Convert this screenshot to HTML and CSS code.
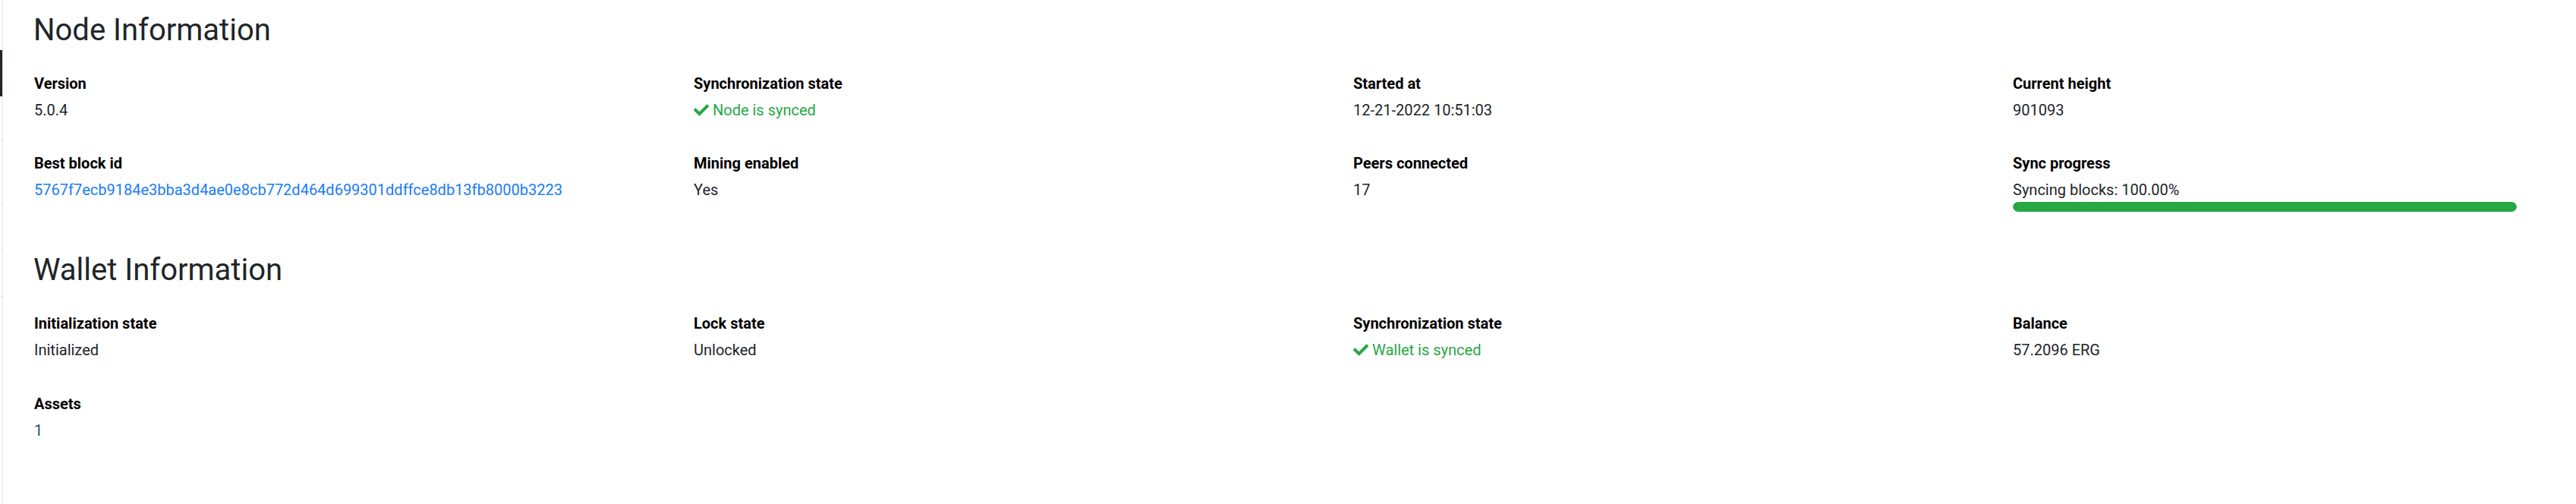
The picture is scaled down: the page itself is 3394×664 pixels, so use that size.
FILE: index.html
```html
<!DOCTYPE html>
<html lang="en">
<head>
<meta charset="utf-8">
<title>Node Information</title>
<link rel="stylesheet" href="styles.css">
</head>
<body>
<div class="layout">
  <aside class="sidebar">
    <div class="nav-active"></div>
    <div class="nav-sep sep-a"></div>
    <div class="nav-sep sep-b"></div>
    <div class="nav-sep sep-c"></div>
    <div class="nav-sep sep-d"></div>
  </aside>
  <main class="content">
    <section class="info-section">
      <h2 class="section-title">Node Information</h2>
      <div class="info-grid">
        <div class="info-item">
          <div class="info-label">Version</div>
          <div class="info-value">5.0.4</div>
        </div>
        <div class="info-item">
          <div class="info-label">Synchronization state</div>
          <div class="info-value status-ok"><svg class="check-icon" viewBox="0 0 512 512" aria-hidden="true"><path d="M173.898 439.404l-166.4-166.4c-9.997-9.997-9.997-26.206 0-36.204l36.203-36.204c9.997-9.998 26.207-9.998 36.204 0L192 312.69 432.095 72.596c9.997-9.997 26.207-9.997 36.204 0l36.203 36.204c9.997 9.997 9.997 26.206 0 36.204l-294.4 294.401c-9.998 9.997-26.207 9.997-36.204-.001z"/></svg> Node is synced</div>
        </div>
        <div class="info-item">
          <div class="info-label">Started at</div>
          <div class="info-value">12-21-2022 10:51:03</div>
        </div>
        <div class="info-item">
          <div class="info-label">Current height</div>
          <div class="info-value">901093</div>
        </div>
        <div class="info-item">
          <div class="info-label">Best block id</div>
          <div class="info-value"><a class="link" href="#">5767f7ecb9184e3bba3d4ae0e8cb772d464d699301ddffce8db13fb8000b3223</a></div>
        </div>
        <div class="info-item">
          <div class="info-label">Mining enabled</div>
          <div class="info-value">Yes</div>
        </div>
        <div class="info-item">
          <div class="info-label">Peers connected</div>
          <div class="info-value">17</div>
        </div>
        <div class="info-item">
          <div class="info-label">Sync progress</div>
          <div class="info-value">Syncing blocks: 100.00%</div>
          <div class="progress"><div class="progress-bar" style="width: 100%"></div></div>
        </div>
      </div>
    </section>
    <section class="info-section">
      <h2 class="section-title">Wallet Information</h2>
      <div class="info-grid">
        <div class="info-item">
          <div class="info-label">Initialization state</div>
          <div class="info-value">Initialized</div>
        </div>
        <div class="info-item">
          <div class="info-label">Lock state</div>
          <div class="info-value">Unlocked</div>
        </div>
        <div class="info-item">
          <div class="info-label">Synchronization state</div>
          <div class="info-value status-ok"><svg class="check-icon" viewBox="0 0 512 512" aria-hidden="true"><path d="M173.898 439.404l-166.4-166.4c-9.997-9.997-9.997-26.206 0-36.204l36.203-36.204c9.997-9.998 26.207-9.998 36.204 0L192 312.69 432.095 72.596c9.997-9.997 26.207-9.997 36.204 0l36.203 36.204c9.997 9.997 9.997 26.206 0 36.204l-294.4 294.401c-9.998 9.997-26.207 9.997-36.204-.001z"/></svg> Wallet is synced</div>
        </div>
        <div class="info-item">
          <div class="info-label">Balance</div>
          <div class="info-value">57.2096 ERG</div>
        </div>
        <div class="info-item">
          <div class="info-label">Assets</div>
          <div class="info-value"><a class="link link-dark" href="#">1</a></div>
        </div>
      </div>
    </section>
  </main>
</div>
</body>
</html>
```
FILE: styles.css
```css
html, body {
  margin: 0;
  padding: 0;
  background: #ffffff;
}

body {
  font-family: Roboto, "Liberation Sans", Arial, sans-serif;
  color: #212529;
  height: 664px;
  overflow: hidden;
}

.layout {
  display: flex;
  min-height: 664px;
}

.sidebar {
  flex: none;
  width: 3px;
  border-right: 1px solid #e3e3e3;
  display: flex;
  flex-direction: column;
}

.nav-active {
  margin-top: 66px;
  height: 61px;
  background: #212529;
}

.nav-sep {
  height: 1px;
  background: #e3e3e3;
}

.sep-a { margin-top: 57px; }
.sep-b { margin-top: 82px; }
.sep-c { margin-top: 61px; }
.sep-d { margin-top: 60px; }

.content {
  flex: 1;
  min-width: 0;
  padding: 16px 0 0 41px;
}

.info-section + .info-section {
  margin-top: 53px;
}

.section-title {
  font-size: 40px;
  line-height: 48px;
  font-weight: 400;
  margin: 0 0 31px -1px;
  color: #212529;
}

.info-grid {
  display: grid;
  grid-template-columns: 869px 869px 869px 1fr;
  row-gap: 40px;
}

.info-section + .info-section .info-grid {
  row-gap: 41px;
}

.info-label {
  font-size: 20px;
  line-height: 30px;
  font-weight: 700;
  color: #000000;
}

.info-value {
  font-size: 20px;
  line-height: 30px;
  margin-top: 5px;
  white-space: nowrap;
}

.status-ok {
  color: #28a745;
}

.check-icon {
  width: 20px;
  height: 20px;
  fill: #28a745;
  vertical-align: -0.125em;
}

.link {
  color: #1a7cf5;
  text-decoration: none;
}

.link-dark {
  color: #1d4f86;
}

.progress {
  width: 664px;
  height: 13px;
  margin-top: 1px;
  border-radius: 7px;
  background: #e9ecef;
  overflow: hidden;
}

.progress-bar {
  height: 100%;
  background: #28a745;
  border-radius: 7px;
}
```
